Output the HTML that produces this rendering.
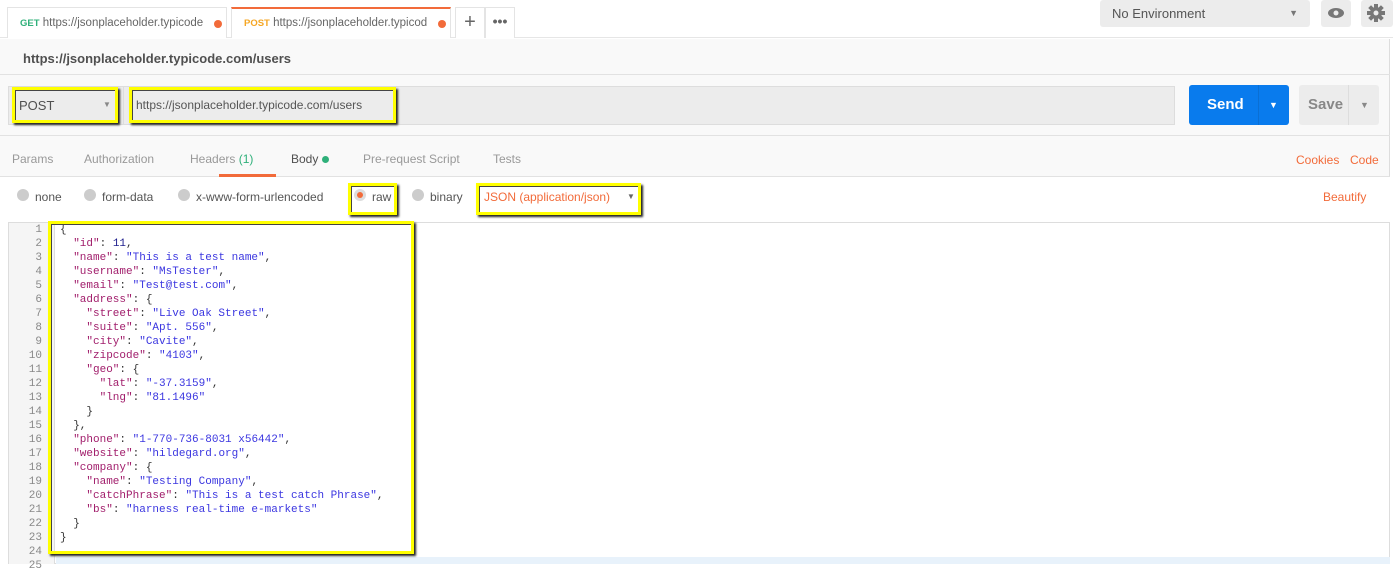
<!DOCTYPE html>
<html><head><meta charset="utf-8"><style>
*{box-sizing:border-box;margin:0;padding:0}
body{width:1393px;height:564px;overflow:hidden;background:#fff;font-family:"Liberation Sans",sans-serif;position:relative;color:#505050}
.abs{position:absolute}
.yb{position:absolute;border:3px solid #ffff00;box-shadow:2px 2px 2px #222, inset 1px 1px 0 #444}
.tab{position:absolute;top:7px;height:31px;border:1px solid #e4e4e4;border-bottom:none;background:#fff;font-size:11.5px;line-height:30px;padding-left:12px;color:#666;white-space:nowrap;overflow:hidden}
.dot{display:inline-block;width:8px;height:8px;border-radius:50%;background:#f26b3a}
.rt{position:absolute;top:190px;font-size:12px;color:#555}
.rc{position:absolute;top:189px;width:12px;height:12px;border-radius:50%;background:#ccc}
.code{position:absolute;left:60px;top:223px;font-family:"Liberation Mono",monospace;font-size:11px;line-height:14px;white-space:pre;color:#333}
.ln{position:absolute;left:10px;top:223px;width:32px;text-align:right;font-family:"Liberation Mono",monospace;font-size:11px;line-height:14px;white-space:pre;color:#888}
.k{color:#a11d6b}.s{color:#3b36e0}.n{color:#1c1c8c}
</style></head><body>
<div class="abs" style="left:0;top:0;width:1393px;height:38px;background:#fff;border-bottom:1px solid #e6e6e6"></div>
<div class="tab" style="left:7px;width:220px"><b style="color:#2fb07a;font-size:9.5px">GET</b> https://jsonplaceholder.typicode<span class="dot" style="position:absolute;left:206px;top:12px"></span></div>
<div class="tab" style="left:231px;width:220px;border-top:2px solid #f26b3a;line-height:28px"><b style="color:#f5a623;font-size:9.5px">POST</b> https://jsonplaceholder.typicod<span class="dot" style="position:absolute;left:206px;top:11px"></span></div>
<div class="tab" style="left:455px;width:30px;padding:0;text-align:center;font-size:20px;line-height:28px">+</div>
<div class="tab" style="left:485px;width:30px;padding:0;text-align:center;font-size:14px;font-weight:bold;line-height:26px">•••</div>
<div class="abs" style="left:1100px;top:0;width:210px;height:27px;background:#ececec;border-radius:3px;font-size:13px;line-height:27px;padding-left:12px;color:#555">No Environment<span style="position:absolute;right:12px;top:0;font-size:9px;color:#777">▼</span></div>
<div class="abs" style="left:1321px;top:0;width:30px;height:27px;background:#ececec;border-radius:3px"><svg width="30" height="27"><ellipse cx="15" cy="13" rx="8" ry="5" fill="#777"/><circle cx="15" cy="13" r="2.5" fill="#ececec"/></svg></div>
<div class="abs" style="left:1361px;top:0;width:32px;height:27px;background:#ececec;border-radius:3px"><svg width="32" height="27"><g transform="translate(15,13)" fill="#777"><circle r="6"/><rect x="-2" y="-9" width="4" height="18"/><rect x="-2" y="-9" width="4" height="18" transform="rotate(45)"/><rect x="-2" y="-9" width="4" height="18" transform="rotate(90)"/><rect x="-2" y="-9" width="4" height="18" transform="rotate(135)"/><circle r="2.5" fill="#ececec"/></g></svg></div>
<div class="abs" style="left:0;top:39px;width:1390px;height:99px;background:#f9f9f9;border-right:1px solid #ddd"></div>
<div class="abs" style="left:23px;top:51px;font-size:13px;font-weight:bold;color:#505050">https://jsonplaceholder.typicode.com/users</div>
<div class="abs" style="left:0;top:74px;width:1390px;height:1px;background:#e2e2e2"></div>
<div class="abs" style="left:8px;top:86px;width:1167px;height:39px;background:#ececec;border:1px solid #ddd"></div>
<div class="abs" style="left:123px;top:86px;width:1px;height:39px;background:#ddd"></div>
<div class="yb" style="left:12px;top:87px;width:106px;height:36px"></div>
<div class="abs" style="left:19px;top:98px;font-size:13px;color:#505050">POST</div>
<div class="abs" style="left:103px;top:100px;font-size:8px;color:#888">▼</div>
<div class="yb" style="left:129px;top:87px;width:267px;height:36px"></div>
<div class="abs" style="left:136px;top:98px;font-size:12px;color:#555">https://jsonplaceholder.typicode.com/users</div>
<div class="abs" style="left:1189px;top:85px;width:100px;height:40px;background:#097bed;border-radius:3px;color:#fff;font-size:15px;font-weight:bold;line-height:40px"><span style="position:absolute;left:18px;top:0">Send</span><span style="position:absolute;left:69px;top:0;width:1px;height:40px;background:#0a6fd4"></span><span style="position:absolute;left:80px;top:0;font-size:9px">▼</span></div>
<div class="abs" style="left:1299px;top:85px;width:80px;height:40px;background:#ececec;border-radius:3px;color:#888;font-size:15px;font-weight:bold;line-height:40px"><span style="position:absolute;left:9px;top:0">Save</span><span style="position:absolute;left:49px;top:0;width:1px;height:40px;background:#ddd"></span><span style="position:absolute;left:61px;top:0;font-size:9px">▼</span></div>
<div class="abs" style="left:0;top:135px;width:1390px;height:1px;background:#e2e2e2"></div>
<div class="abs" style="left:0;top:136px;width:1390px;height:41px;background:#f9f9f9;border-right:1px solid #ddd;border-bottom:1px solid #e2e2e2"></div>
<div class="abs" style="top:152px;left:12px;font-size:12px;color:#999">Params</div>
<div class="abs" style="top:152px;left:84px;font-size:12px;color:#999">Authorization</div>
<div class="abs" style="top:152px;left:190px;font-size:12px;color:#999">Headers <span style="color:#2fb07a">(1)</span></div>
<div class="abs" style="top:152px;left:291px;font-size:12px;color:#505050">Body <span class="dot" style="background:#2fb07a;width:7px;height:7px"></span></div>
<div class="abs" style="left:219px;top:174px;width:57px;height:3px;background:#f26b3a"></div>
<div class="abs" style="top:152px;left:363px;font-size:12px;color:#999">Pre-request Script</div>
<div class="abs" style="top:152px;left:493px;font-size:12px;color:#999">Tests</div>
<div class="abs" style="top:153px;left:1296px;font-size:12px;color:#f26b3a">Cookies</div>
<div class="abs" style="top:153px;left:1350px;font-size:12px;color:#f26b3a">Code</div>
<div class="rc" style="left:17px"></div><div class="rt" style="left:35px">none</div>
<div class="rc" style="left:84px"></div><div class="rt" style="left:102px">form-data</div>
<div class="rc" style="left:178px"></div><div class="rt" style="left:196px">x-www-form-urlencoded</div>
<div class="yb" style="left:348px;top:183px;width:49px;height:32px"></div>
<div class="rc" style="left:354px;background:#ddd"><div style="position:absolute;left:3px;top:3px;width:6px;height:6px;border-radius:50%;background:#f26b3a"></div></div><div class="rt" style="left:372px">raw</div>
<div class="rc" style="left:412px"></div><div class="rt" style="left:430px">binary</div>
<div class="yb" style="left:476px;top:183px;width:165px;height:32px"></div>
<div class="rt" style="left:484px;color:#f26b3a">JSON (application/json)</div>
<div class="abs" style="left:627px;top:192px;font-size:8px;color:#666">▼</div>
<div class="abs" style="top:190px;left:1323px;font-size:12px;color:#f26b3a">Beautify</div>
<div class="abs" style="left:8px;top:222px;width:1382px;height:342px;border:1px solid #ddd;background:#fff"></div>
<div class="abs" style="left:9px;top:223px;width:46px;height:341px;background:#f5f5f5;border-right:1px solid #ddd"></div>
<div class="abs" style="left:56px;top:557px;width:1334px;height:7px;background:#e8f2fb"></div>
<div class="ln">1
2
3
4
5
6
7
8
9
10
11
12
13
14
15
16
17
18
19
20
21
22
23
24
25</div>
<div class="code">{
  <span class="k">"id"</span>: <span class="n">11</span>,
  <span class="k">"name"</span>: <span class="s">"This is a test name"</span>,
  <span class="k">"username"</span>: <span class="s">"MsTester"</span>,
  <span class="k">"email"</span>: <span class="s">"Test@test.com"</span>,
  <span class="k">"address"</span>: {
    <span class="k">"street"</span>: <span class="s">"Live Oak Street"</span>,
    <span class="k">"suite"</span>: <span class="s">"Apt. 556"</span>,
    <span class="k">"city"</span>: <span class="s">"Cavite"</span>,
    <span class="k">"zipcode"</span>: <span class="s">"4103"</span>,
    <span class="k">"geo"</span>: {
      <span class="k">"lat"</span>: <span class="s">"-37.3159"</span>,
      <span class="k">"lng"</span>: <span class="s">"81.1496"</span>
    }
  },
  <span class="k">"phone"</span>: <span class="s">"1-770-736-8031 x56442"</span>,
  <span class="k">"website"</span>: <span class="s">"hildegard.org"</span>,
  <span class="k">"company"</span>: {
    <span class="k">"name"</span>: <span class="s">"Testing Company"</span>,
    <span class="k">"catchPhrase"</span>: <span class="s">"This is a test catch Phrase"</span>,
    <span class="k">"bs"</span>: <span class="s">"harness real-time e-markets"</span>
  }
}
</div>
<div class="yb" style="left:48px;top:221px;width:366px;height:333px"></div>
</body></html>
